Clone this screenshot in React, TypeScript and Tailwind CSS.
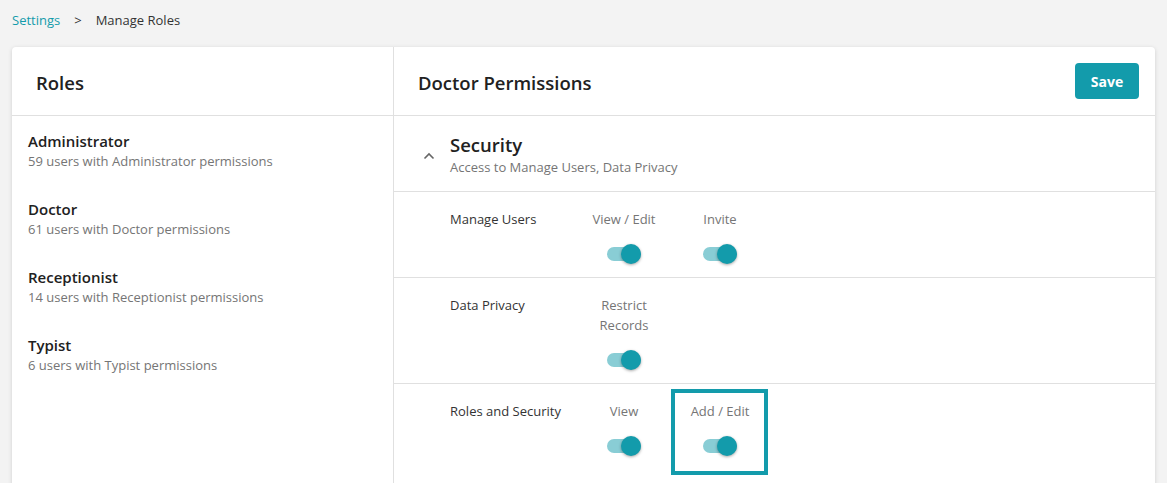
// Manage Roles — role list on the left, permission toggles for the
// selected role on the right.

import type { ReactNode } from "react";

type Role = { name: string; count: number };

const roles: Role[] = [
  { name: "Administrator", count: 59 },
  { name: "Doctor", count: 61 },
  { name: "Receptionist", count: 14 },
  { name: "Typist", count: 6 },
];

type Perm = { label: string; on: boolean; highlight?: boolean };
type Row = { label: string; perms: Perm[] };

const rows: Row[] = [
  {
    label: "Manage Users",
    perms: [
      { label: "View / Edit", on: true },
      { label: "Invite", on: true },
    ],
  },
  { label: "Data Privacy", perms: [{ label: "Restrict Records", on: true }] },
  {
    label: "Roles and Security",
    perms: [
      { label: "View", on: true },
      { label: "Add / Edit", on: true, highlight: true },
    ],
  },
];

function Toggle({ on }: { on: boolean }) {
  return (
    <span className="relative inline-flex h-[20px] w-[34px] items-center">
      <span
        className={`h-[14px] w-[34px] rounded-full ${on ? "bg-[#89cdd5]" : "bg-[#bdbdbd]"}`}
      />
      <span
        className={`absolute top-0 h-[20px] w-[20px] rounded-full shadow-[0_1px_3px_rgba(0,0,0,0.35)] ${
          on ? "right-0 bg-[#139bab]" : "left-0 bg-[#fafafa]"
        }`}
      />
    </span>
  );
}

function PanelHeader({ children }: { children: ReactNode }) {
  return (
    <div className="flex h-[69px] items-center border-b border-[#e0e0e0] pl-[24px] pr-[16px]">
      {children}
    </div>
  );
}

export default function App() {
  return (
    <div
      className="min-h-screen bg-[#f3f3f3] px-[12px] pb-4 text-[#212121]"
      style={{ fontFamily: '"Open Sans", "Noto Sans", sans-serif' }}
    >
      <nav className="flex h-[47px] items-center pb-[6px] text-[13px]">
        <a className="text-[#139bab]">Settings</a>
        <span className="mx-[14px] text-[#333]">&gt;</span>
        <span className="text-[#333]">Manage Roles</span>
      </nav>

      <div className="flex min-h-[460px] rounded-[4px] bg-white shadow-[0_1px_4px_rgba(0,0,0,0.15)]">
        {/* Roles list */}
        <aside className="w-[382px] shrink-0 border-r border-[#e0e0e0]">
          <PanelHeader>
            <h2 className="pt-[3px] text-[18.5px] font-semibold leading-[26px]">Roles</h2>
          </PanelHeader>
          <ul>
            {roles.map((r) => (
              <li key={r.name} className="px-[16px] pt-[15px] pb-[12px]">
                <p className="text-[15px] font-semibold leading-[20px]">{r.name}</p>
                <p className="text-[13px] leading-[21px] text-[#757575]">
                  {r.count} users with {r.name} permissions
                </p>
              </li>
            ))}
          </ul>
        </aside>

        {/* Permissions */}
        <section className="flex-1">
          <PanelHeader>
            <h2 className="flex-1 pt-[3px] text-[18.5px] font-semibold leading-[26px]">
              Doctor Permissions
            </h2>
            <button className="h-[36px] w-[64px] rounded-[4px] bg-[#139bab] text-[14px] font-bold text-white">
              Save
            </button>
          </PanelHeader>

          <div className="flex h-[76px] items-center border-b border-[#e0e0e0] pl-[29px]">
            <svg
              width="12"
              height="8"
              viewBox="0 0 12 8"
              className="mr-[15px] mt-[4px]"
              fill="none"
              stroke="#666"
              strokeWidth="1.6"
            >
              <path d="M1.5 6.5 6 2l4.5 4.5" />
            </svg>
            <div>
              <h3 className="text-[18.5px] font-semibold leading-[26px]">Security</h3>
              <p className="text-[13px] leading-[18px] text-[#757575]">
                Access to Manage Users, Data Privacy
              </p>
            </div>
          </div>

          {rows.map((row, i) => (
            <div
              key={row.label}
              className={`flex pt-[17px] pl-[56px] ${
                i < rows.length - 1 ? "border-b border-[#e0e0e0] pb-[10px]" : "pb-[30px]"
              }`}
            >
              <div className="w-[126px] shrink-0 text-[13px] leading-[20px] text-[#333]">
                {row.label}
              </div>
              {row.perms.map((p) => (
                <div
                  key={p.label}
                  className="relative flex w-[96px] flex-col items-center px-[12px] text-center"
                >
                  {p.highlight && (
                    <span className="pointer-events-none absolute -top-[12px] -bottom-[16px] -left-[1px] right-0 border-4 border-[#139bab]" />
                  )}
                  <span className="text-[13px] leading-[20px] text-[#757575]">
                    {p.label}
                  </span>
                  <span className="mt-[14px]">
                    <Toggle on={p.on} />
                  </span>
                </div>
              ))}
            </div>
          ))}
        </section>
      </div>
    </div>
  );
}
